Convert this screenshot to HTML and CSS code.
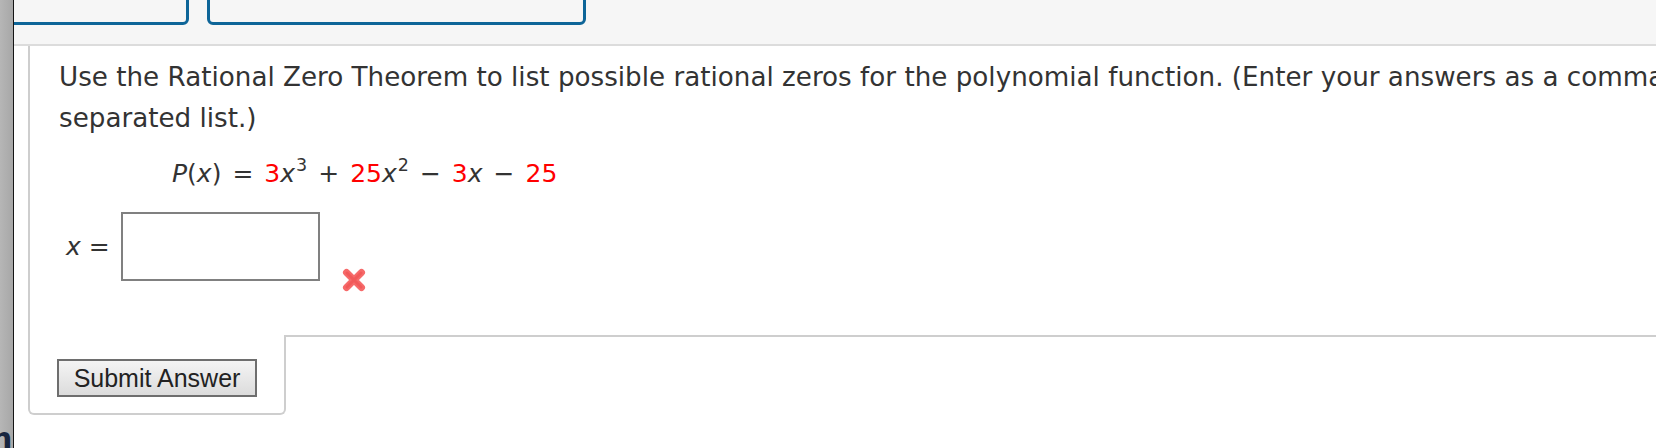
FILE: index.html
```html
<!DOCTYPE html>
<html lang="en">
<head>
  <meta charset="UTF-8" />
  <meta name="viewport" content="width=device-width, initial-scale=1.0"/>
  <title>Rational Zero Theorem</title>

  <link rel="stylesheet" href="styles.css">
</head>

<body>
  <div class="page">
    <div class="side">
      <span class="side-mark">n</span>
    </div>

    <div class="main">
      <div class="topbar">
        <div class="tab tab-first"></div>
        <div class="tab tab-second"></div>
      </div>

      <div class="card">
        <div class="question">
          <p class="prompt">Use the Rational Zero Theorem to list possible rational zeros for the polynomial function. (Enter your answers as a comma-separated list.)</p>

          <div class="equation">
            <span class="var">P</span>(<span class="var">x</span>)<span class="op">=</span><span class="coef">3</span><span class="var">x</span><sup>3</sup><span class="op">+</span><span class="coef">25</span><span class="var">x</span><sup>2</sup><span class="op">&minus;</span><span class="coef">3</span><span class="var">x</span><span class="op">&minus;</span><span class="coef">25</span>
          </div>

          <div class="answer-row">
            <label for="answer" class="answer-label"><span class="var">x</span> =</label>
            <input id="answer" type="text" class="answer-input">
            <svg class="wrong-mark" width="28" height="28" viewBox="0 0 28 28">
              <path d="M6.5 6.5 L21.5 21.5 M21.5 6.5 L6.5 21.5" stroke="#f66a6a" stroke-width="7" stroke-linecap="round" fill="none"/>
              <path d="M7 7 L21 21 M21 7 L7 21" stroke="#ec4646" stroke-width="3" stroke-linecap="round" fill="none" opacity="0.45"/>
            </svg>
          </div>
        </div>

        <div class="footer">
          <div class="footer-left">
            <button class="submit-button">Submit Answer</button>
          </div>
          <div class="footer-right"></div>
        </div>
      </div>
    </div>
  </div>
</body>
</html>
```

FILE: styles.css
```css
* {
  box-sizing: border-box;
}

body {
  margin: 0;
  background: #fff;
  font-family: 'DejaVu Sans', Verdana, sans-serif;
  color: #333;
  overflow: hidden;
}

.page {
  display: flex;
  height: 448px;
  overflow: hidden;
}

/* left window edge */
.side {
  width: 14px;
  flex-shrink: 0;
  background: linear-gradient(90deg, #b6b6b6 0%, #a7a7a7 100%);
  border-right: 1px solid #151515;
  display: flex;
  flex-direction: column;
  justify-content: flex-end;
  overflow: hidden;
}

.side-mark {
  font-size: 30px;
  font-weight: 700;
  line-height: 1;
  color: #17253f;
  margin-left: -9px;
  margin-bottom: -6px;
}

.main {
  flex: 1;
  min-width: 0;
  overflow: hidden;
}

.topbar {
  height: 46px;
  background: #f6f6f6;
  border-bottom: 2px solid #dcdcdc;
  display: flex;
  overflow: hidden;
}

.tab {
  margin-top: -10px;
  height: 35px;
  border: 3px solid #0e6598;
  border-radius: 0 0 6px 6px;
}

.tab-first {
  margin-left: -10px;
  width: 185px;
}

.tab-second {
  margin-left: 18px;
  width: 379px;
}

.card {
  margin-left: 14px;
  width: 1740px;
}

.question {
  border-left: 2px solid #cecece;
  padding: 11px 0 54px 29px;
}

.prompt {
  margin: 0;
  width: 1700px;
  font-size: 26.2px;
  line-height: 41px;
}

.equation {
  margin: 14px 0 0 113px;
  font-size: 25px;
  line-height: 41px;
}

.var {
  font-style: italic;
}

.coef {
  color: #ff0000;
}

.op {
  margin: 0 11px;
}

sup {
  font-size: 17.5px;
  line-height: 1;
  vertical-align: 11px;
  margin-left: 1px;
}

.answer-row {
  margin-top: 18px;
  padding-left: 7px;
  display: flex;
  align-items: center;
}

.answer-label {
  font-size: 25px;
  margin-right: 11px;
}

.answer-input {
  width: 199px;
  height: 69px;
  border: 2px solid #808080;
  background: #fff;
  margin: 0;
  font-size: 25px;
}

.wrong-mark {
  align-self: flex-end;
  margin-left: 20px;
  margin-bottom: -13px;
}

.footer {
  display: flex;
}

.footer-left {
  width: 258px;
  height: 80px;
  border: 2px solid #cecece;
  border-top: none;
  border-radius: 0 0 6px 6px;
  padding: 24px 0 0 27px;
}

.footer-right {
  flex: 1;
  border-top: 2px solid #cecece;
}

.submit-button {
  width: 200px;
  height: 38px;
  padding: 0;
  border: 2px solid #6e6e6e;
  border-radius: 0;
  background: linear-gradient(180deg, #f4f4f4 0%, #dcdcdc 100%);
  font-family: 'Liberation Sans', Arial, sans-serif;
  font-size: 25px;
  color: #222;
  cursor: pointer;
}
```
